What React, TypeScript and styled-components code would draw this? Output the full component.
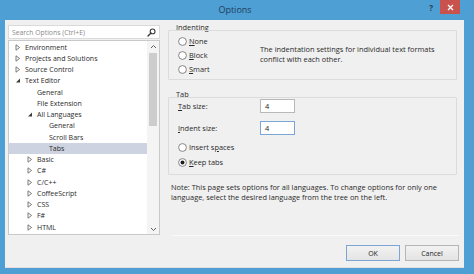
import React from "react";
import styled, { createGlobalStyle } from "styled-components";

const GlobalStyle = createGlobalStyle`
  html, body {
    margin: 0;
    padding: 0;
    width: 474px;
    height: 274px;
    overflow: hidden;
    background: #4e9fd3;
  }
  * {
    box-sizing: border-box;
  }
`;

type TreeNode = {
  label: string;
  level: number;
  state?: "open" | "closed";
  selected?: boolean;
};

const treeItems: TreeNode[] = [
  { label: "Environment", level: 0, state: "closed" },
  { label: "Projects and Solutions", level: 0, state: "closed" },
  { label: "Source Control", level: 0, state: "closed" },
  { label: "Text Editor", level: 0, state: "open" },
  { label: "General", level: 1 },
  { label: "File Extension", level: 1 },
  { label: "All Languages", level: 1, state: "open" },
  { label: "General", level: 2 },
  { label: "Scroll Bars", level: 2 },
  { label: "Tabs", level: 2, selected: true },
  { label: "Basic", level: 1, state: "closed" },
  { label: "C#", level: 1, state: "closed" },
  { label: "C/C++", level: 1, state: "closed" },
  { label: "CoffeeScript", level: 1, state: "closed" },
  { label: "CSS", level: 1, state: "closed" },
  { label: "F#", level: 1, state: "closed" },
  { label: "HTML", level: 1, state: "closed" },
  { label: "HTML (Web Forms)", level: 1, state: "closed" },
];

const Expander = ({ state }: { state?: "open" | "closed" }) => {
  if (!state) return <ExpanderSlot />;
  return (
    <ExpanderSlot>
      {state === "closed" ? (
        <svg width="6" height="7" viewBox="0 0 6 7">
          <path d="M1 0.8 L4.6 3.5 L1 6.2 Z" fill="none" stroke="#6d6d6d" strokeWidth="0.9" />
        </svg>
      ) : (
        <svg width="6" height="7" viewBox="0 0 6 7">
          <path d="M5 1.5 L5 5.5 L1 5.5 Z" fill="#3c3c3c" />
        </svg>
      )}
    </ExpanderSlot>
  );
};

const Radio = ({ checked }: { checked?: boolean }) => (
  <RadioCircle>
    <svg width="9" height="9" viewBox="0 0 9 9">
      <circle cx="4.5" cy="4.5" r="3.9" fill="#fff" stroke="#6a6a6a" strokeWidth="0.8" />
      {checked && <circle cx="4.5" cy="4.5" r="2" fill="#1e1e1e" />}
    </svg>
  </RadioCircle>
);

const SearchIcon = () => (
  <svg width="9" height="9" viewBox="0 0 9 9">
    <circle cx="5.6" cy="3.4" r="2.4" fill="none" stroke="#3a3a3a" strokeWidth="1.1" />
    <path d="M4 5 L1 8" stroke="#3a3a3a" strokeWidth="1.4" strokeLinecap="round" />
  </svg>
);

export default function App() {
  return (
    <>
      <GlobalStyle />
      <Window>
        <TitleBar>
          <Title>Options</Title>
          <HelpGlyph>?</HelpGlyph>
          <CloseButton>
            <svg width="7" height="7" viewBox="0 0 7 7">
              <path d="M1 1 L6 6 M6 1 L1 6" stroke="#fff" strokeWidth="1.3" />
            </svg>
          </CloseButton>
        </TitleBar>
        <Body>
          <Main>
            <LeftColumn>
              <SearchBox>
                <Placeholder>Search Options (Ctrl+E)</Placeholder>
                <SearchIcon />
              </SearchBox>
              <Tree>
                <TreeList>
                  {treeItems.map((item, i) => (
                    <TreeRow key={i} $level={item.level} $selected={item.selected}>
                      <Expander state={item.state} />
                      <span>{item.label}</span>
                    </TreeRow>
                  ))}
                </TreeList>
                <ScrollBar>
                  <ScrollArrow>
                    <svg width="7" height="5" viewBox="0 0 7 5">
                      <path d="M1 4 L3.5 1.5 L6 4" fill="none" stroke="#606060" strokeWidth="1" />
                    </svg>
                  </ScrollArrow>
                  <ScrollTrack>
                    <ScrollThumb />
                  </ScrollTrack>
                  <ScrollArrow>
                    <svg width="7" height="5" viewBox="0 0 7 5">
                      <path d="M1 1 L3.5 3.5 L6 1" fill="none" stroke="#606060" strokeWidth="1" />
                    </svg>
                  </ScrollArrow>
                </ScrollBar>
              </Tree>
            </LeftColumn>
            <RightColumn>
              <Group $gap={12}>
                <GroupHeader>Indenting</GroupHeader>
                <GroupBox $height={50} $padTop={5}>
                  <IndentGrid>
                    <RadioColumn>
                      <RadioRow>
                        <Radio />
                        <Label><u>N</u>one</Label>
                      </RadioRow>
                      <RadioRow>
                        <Radio />
                        <Label><u>B</u>lock</Label>
                      </RadioRow>
                      <RadioRow>
                        <Radio />
                        <Label><u>S</u>mart</Label>
                      </RadioRow>
                    </RadioColumn>
                    <Description>
                      The indentation settings for individual text formats
                      <br />
                      conflict with each other.
                    </Description>
                  </IndentGrid>
                </GroupBox>
              </Group>
              <Group $gap={8}>
                <GroupHeader>Tab</GroupHeader>
                <GroupBox $height={78} $padTop={1}>
                  <FieldRow>
                    <FieldLabel><u>T</u>ab size:</FieldLabel>
                    <TextBox>4</TextBox>
                  </FieldRow>
                  <FieldRow>
                    <FieldLabel><u>I</u>ndent size:</FieldLabel>
                    <TextBox $focused>4</TextBox>
                  </FieldRow>
                  <TabRadios>
                    <RadioRow>
                      <Radio />
                      <Label>Insert s<u>p</u>aces</Label>
                    </RadioRow>
                    <RadioRow>
                      <Radio checked />
                      <Label><u>K</u>eep tabs</Label>
                    </RadioRow>
                  </TabRadios>
                </GroupBox>
              </Group>
              <Note>
                Note: This page sets options for all languages. To change options for only one
                <br />
                language, select the desired language from the tree on the left.
              </Note>
            </RightColumn>
          </Main>
          <Footer>
            <Separator />
            <ButtonRow>
              <Button $primary>OK</Button>
              <Button>Cancel</Button>
            </ButtonRow>
          </Footer>
        </Body>
      </Window>
    </>
  );
}

const Window = styled.div`
  width: 474px;
  height: 274px;
  display: flex;
  flex-direction: column;
  background: #4e9fd3;
  padding: 0 10px 6px 5px;
  font-family: "Open Sans", "Noto Sans", sans-serif;
  font-size: 7px;
  color: #1e1e1e;
`;

const TitleBar = styled.div`
  height: 21px;
  position: relative;
  display: flex;
  align-items: center;
  justify-content: center;
`;

const Title = styled.div`
  font-size: 9px;
  color: #1f3d5e;
  margin-top: -2px;
  margin-left: 1px;
`;

const HelpGlyph = styled.div`
  position: absolute;
  right: 31px;
  top: 2px;
  font-size: 8px;
  font-weight: bold;
  color: #2c3e50;
`;

const CloseButton = styled.div`
  position: absolute;
  right: 4px;
  top: 0;
  width: 20px;
  height: 14px;
  background: #c9524c;
  display: flex;
  align-items: center;
  justify-content: center;
`;

const Body = styled.div`
  flex: 1;
  background: #f0f0f0;
  display: flex;
  flex-direction: column;
  border-bottom: 1px solid #e9dcdc;
`;

const Main = styled.div`
  display: flex;
  padding: 5px 0 0 3px;
  gap: 8px;
`;

const LeftColumn = styled.div`
  width: 152px;
  display: flex;
  flex-direction: column;
  gap: 1px;
`;

const SearchBox = styled.div`
  height: 14px;
  background: #fff;
  border: 1px solid #dadada;
  display: flex;
  align-items: center;
  justify-content: space-between;
  padding: 0 3px 0 3px;
`;

const Placeholder = styled.span`
  color: #8a8a8a;
  font-size: 6.8px;
`;

const Tree = styled.div`
  height: 195px;
  background: #fff;
  border: 1px solid #c9c9c9;
  display: flex;
  overflow: hidden;
`;

const TreeList = styled.div`
  flex: 1;
  overflow: hidden;
  padding-top: 0.5px;
`;

const TreeRow = styled.div<{ $level: number; $selected?: boolean }>`
  height: 11.25px;
  display: flex;
  align-items: center;
  padding-left: ${({ $level }) => 5 + $level * 12}px;
  background: ${({ $selected }) => ($selected ? "#cdd3e0" : "transparent")};
  color: #2a2a2a;
  white-space: nowrap;
`;

const ExpanderSlot = styled.span`
  width: 9px;
  height: 7px;
  display: inline-flex;
  align-items: center;
  margin-left: 1px;
  margin-right: 1px;
`;

const ScrollBar = styled.div`
  width: 12px;
  display: flex;
  flex-direction: column;
  background: #f4f4f4;
`;

const ScrollArrow = styled.div`
  height: 10px;
  display: flex;
  align-items: center;
  justify-content: center;
`;

const ScrollTrack = styled.div`
  flex: 1;
  padding: 2px 2px;
`;

const ScrollThumb = styled.div`
  height: 73px;
  background: #cdcdcd;
`;

const RightColumn = styled.div`
  flex: 1;
  padding-right: 7px;
  display: flex;
  flex-direction: column;
  font-size: 7.4px;
`;

const Group = styled.div<{ $gap: number }>`
  display: flex;
  flex-direction: column;
  margin-bottom: ${({ $gap }) => $gap}px;
`;

const GroupHeader = styled.div`
  height: 6px;
  line-height: 6px;
  padding-left: 8px;
  margin-top: -1px;
  color: #2a2a2a;
`;

const GroupBox = styled.div<{ $height: number; $padTop: number }>`
  height: ${({ $height }) => $height}px;
  border: 1px solid #dcdcdc;
  border-radius: 1px;
  padding: ${({ $padTop }) => $padTop}px 0 0 9px;
`;

const IndentGrid = styled.div`
  display: flex;
  align-items: flex-start;
`;

const RadioColumn = styled.div`
  display: flex;
  flex-direction: column;
  gap: 4px;
  width: 82px;
`;

const RadioRow = styled.div`
  display: flex;
  align-items: center;
  gap: 2px;
  height: 10px;
`;

const RadioCircle = styled.span`
  display: inline-flex;
`;

const Label = styled.span`
  color: #2a2a2a;
  u {
    text-decoration: underline;
    text-underline-offset: 1px;
  }
`;

const Description = styled.div`
  margin-top: 8px;
  line-height: 10px;
  color: #2a2a2a;
`;

const FieldRow = styled.div`
  display: flex;
  align-items: center;
  height: 14px;
  margin-bottom: 8px;
`;

const FieldLabel = styled.span`
  width: 82px;
  color: #2a2a2a;
`;

const TextBox = styled.div<{ $focused?: boolean }>`
  width: 35px;
  height: 14px;
  background: #fff;
  border: 1px solid ${({ $focused }) => ($focused ? "#7aa7d6" : "#b8b8b8")};
  padding-left: 4px;
  display: flex;
  align-items: center;
`;

const TabRadios = styled.div`
  display: flex;
  flex-direction: column;
  gap: 5px;
  margin-top: -1px;
`;

const Note = styled.div`
  padding-left: 3px;
  line-height: 9.5px;
  color: #2a2a2a;
`;

const Footer = styled.div`
  margin-top: auto;
  padding: 0 5px 6px 167px;
  display: flex;
  flex-direction: column;
`;

const Separator = styled.div`
  height: 1px;
  background: #d6d6d6;
  border-bottom: 1px solid #fafafa;
  margin-bottom: 9px;
`;

const ButtonRow = styled.div`
  display: flex;
  justify-content: flex-end;
  gap: 5px;
`;

const Button = styled.div<{ $primary?: boolean }>`
  width: 54px;
  height: 16px;
  display: flex;
  align-items: center;
  justify-content: center;
  background: linear-gradient(#f2f2f2, #e4e4e4);
  border: 1px solid ${({ $primary }) => ($primary ? "#7ba5d4" : "#b5b5b5")};
  color: #1e1e1e;
`;
